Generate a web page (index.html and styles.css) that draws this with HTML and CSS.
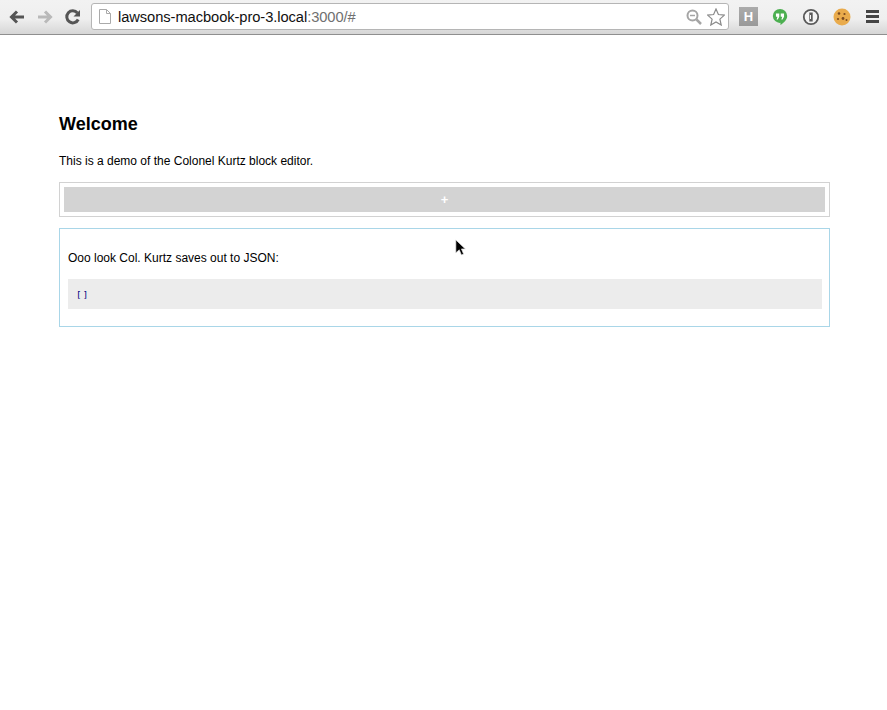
FILE: index.html
```html
<!DOCTYPE html>
<html lang="en">
<head>
<meta charset="utf-8">
<title>Colonel Kurtz</title>
<link rel="stylesheet" href="styles.css">
</head>
<body>
<header class="chrome">
  <div class="nav">
    <svg class="nav-icon" viewBox="0 0 18 18"><path d="M16 9H4M9 3.500 3.500 9 9 14.500" fill="none" stroke="#555" stroke-width="3"/></svg>
    <svg class="nav-icon" viewBox="0 0 18 18"><path d="M2 9h12M9 3.500 14.500 9 9 14.500" fill="none" stroke="#b9b9b9" stroke-width="3"/></svg>
    <svg class="nav-icon" viewBox="0 0 18 18"><path d="M14.200 11.500A6 6 0 1 1 13.400 5" fill="none" stroke="#555" stroke-width="3"/><path d="M16 2v6.500h-6.500z" fill="#555"/></svg>
  </div>
  <div class="omnibox">
    <svg class="page-icon" viewBox="0 0 12 15"><path d="M.5.500h7l4 4v10H.5zM7.500.500v4h4" fill="#fff" stroke="#aaa"/></svg>
    <span class="url">lawsons-macbook-pro-3.local<span class="url-dim">:3000/#</span></span>
    <svg class="zoom-icon" viewBox="0 0 16 16"><circle cx="6.500" cy="6.500" r="5" fill="none" stroke="#a5a5a5" stroke-width="2"/><path d="M4 6.500h5" stroke="#a5a5a5" stroke-width="1.500"/><path d="m10.500 10.500 4.500 4.500" stroke="#a5a5a5" stroke-width="2.500"/></svg>
    <svg class="star-icon" viewBox="0 0 18 18"><path d="m9 1 2.400 5.500 6 .6-4.500 4 1.300 5.900L9 14l-5.200 3 1.300-5.900-4.500-4 6-.6z" fill="#fff" stroke="#8a8a8a" stroke-width="1.200"/></svg>
  </div>
  <div class="extensions">
    <span class="ext-h">H</span>
    <svg class="ext" viewBox="0 0 18 20"><path d="M9 1a8 8 0 0 1 8 8c0 4.500-4 7.500-7.500 10v-2.500A7.800 7.800 0 0 1 1 9a8 8 0 0 1 8-8z" fill="#4caf50"/><path d="M4.500 6h3.700v3.700l-1.700 3H5.200l1-3H4.500zM9.800 6h3.700v3.700l-1.700 3h-1.300l1-3H9.800z" fill="#fff"/></svg>
    <svg class="ext" viewBox="0 0 18 18"><circle cx="9" cy="9" r="7.200" fill="#f4f4f4" stroke="#5a5a5a" stroke-width="1.800"/><path d="M9 4.500v9" stroke="#5a5a5a" stroke-width="3.400"/><path d="M8.500 7v4" stroke="#f4f4f4"/></svg>
    <svg class="ext" viewBox="0 0 18 18"><circle cx="9" cy="9" r="8.500" fill="#e9ab4c"/><circle cx="6" cy="5.500" r="1.300" fill="#7a4a20"/><circle cx="11.500" cy="6" r="1.100" fill="#7a4a20"/><circle cx="5" cy="11" r="1.100" fill="#7a4a20"/><circle cx="10" cy="10.500" r="1.400" fill="#7a4a20"/><circle cx="13.500" cy="12" r="1" fill="#7a4a20"/></svg>
    <span class="menu"><i></i><i></i><i></i></span>
  </div>
</header>
<main class="page">
  <h1 class="title">Welcome</h1>
  <p class="intro">This is a demo of the Colonel Kurtz block editor.</p>
  <section class="editor">
    <button class="add" type="button">+</button>
  </section>
  <section class="output">
    <p class="output-text">Ooo look Col. Kurtz saves out to JSON:</p>
    <pre class="json"><code><span class="bracket">[ ]</span></code></pre>
  </section>
</main>
<svg class="cursor" viewBox="0 0 14 22"><path d="M1 1v15l4-3.500 2.500 6 2.500-1-2.500-6H12z" fill="#000" stroke="#ddd" stroke-width=".8"/></svg>
</body>
</html>
```
FILE: styles.css
```css
html, body { margin: 0; padding: 0; background: #fff; }
body { width: 887px; height: 710px; overflow: hidden; position: relative; font-family: "Liberation Sans", Arial, sans-serif; color: #000; }

.chrome { box-sizing: border-box; height: 35px; display: flex; align-items: flex-start; padding: 3px 0 0 8px; background: linear-gradient(#f2f2f2, #efefef 55%, #d6d6d6); border-bottom: 1px solid #8f8f8f; }
.nav { display: flex; gap: 10px; padding-top: 5px; width: 83px; flex: none; }
.nav-icon { width: 18px; height: 18px; flex: none; }
.omnibox { box-sizing: border-box; width: 638px; height: 27px; flex: none; display: flex; align-items: center; padding: 0 3px 0 7px; background: #fff; border: 1px solid #b5b5b5; border-radius: 3px; }
.page-icon { width: 12px; height: 15px; flex: none; margin-right: 7px; }
.url { font-size: 14.700px; letter-spacing: -.07px; color: #111; flex: 1; white-space: nowrap; }
.url-dim { color: #707070; }
.zoom-icon { width: 16px; height: 16px; flex: none; margin-right: 5px; }
.star-icon { width: 18px; height: 18px; flex: none; }
.extensions { display: flex; align-items: center; height: 27px; padding-left: 10px; gap: 13px; }
.ext-h { width: 19px; height: 19px; background: linear-gradient(#ababab, #999); color: #fff; font-size: 13px; font-weight: bold; text-align: center; line-height: 19px; }
.ext { width: 18px; height: 18px; flex: none; }
.menu { display: flex; flex-direction: column; gap: 2px; width: 13px; margin-left: 2px; }
.menu i { display: block; height: 3px; background: #444; }

.page { width: 771px; margin-left: 59px; }
.title { margin: 0; padding-top: 79px; font-size: 18px; line-height: 21px; font-weight: bold; }
.intro { margin: 18px 0 0; font-size: 12px; line-height: 16px; }
.editor { box-sizing: border-box; height: 35px; margin-top: 13px; padding: 4px; border: 1px solid #d2d2d2; }
.add { display: block; width: 100%; height: 25px; padding: 0; border: 0; background: #d3d3d3; color: #fff; font: bold 13px/25px "Liberation Sans", Arial, sans-serif; text-align: center; }
.output { box-sizing: border-box; height: 99px; margin-top: 11px; padding: 21px 7px 0 8px; border: 1px solid #a9d6e8; }
.output-text { margin: 0; font-size: 12px; line-height: 16px; }
.json { margin: 13px 0 0; height: 30px; padding: 0 8px; background: #ececec; font: 9px/33px "Liberation Mono", monospace; letter-spacing: -2px; }
.bracket { color: #000080; }

.cursor { position: absolute; left: 455px; top: 239px; width: 12px; height: 19px; }
```
